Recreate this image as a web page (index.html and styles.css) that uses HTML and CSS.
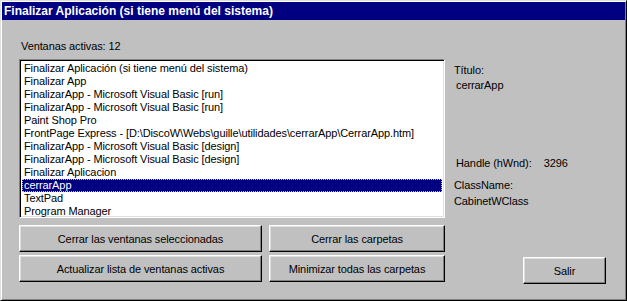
FILE: index.html
```html
<!DOCTYPE html>
<html lang="es">

<head>
    <meta charset="UTF-8">
    <title>Finalizar Aplicación</title>
    <link rel="stylesheet" href="styles.css">
</head>

<body>
    <!-- Ventana principal -->
    <div class="window">
        <div class="title-bar">Finalizar Aplicación (si tiene menú del sistema)</div>

        <div class="client">
            <!-- Columna izquierda: lista y botones -->
            <div class="left-col">
                <div class="label count">Ventanas activas: 12</div>

                <div class="listbox">
                    <div class="item">Finalizar Aplicación (si tiene menú del sistema)</div>
                    <div class="item">Finalizar App</div>
                    <div class="item">FinalizarApp - Microsoft Visual Basic [run]</div>
                    <div class="item">FinalizarApp - Microsoft Visual Basic [run]</div>
                    <div class="item">Paint Shop Pro</div>
                    <div class="item">FrontPage Express - [D:\DiscoW\Webs\guille\utilidades\cerrarApp\CerrarApp.htm]</div>
                    <div class="item">FinalizarApp - Microsoft Visual Basic [design]</div>
                    <div class="item">FinalizarApp - Microsoft Visual Basic [design]</div>
                    <div class="item">Finalizar Aplicacion</div>
                    <div class="item selected">cerrarApp</div>
                    <div class="item">TextPad</div>
                    <div class="item">Program Manager</div>
                </div>

                <div class="button-grid">
                    <button class="btn">Cerrar las ventanas seleccionadas</button>
                    <button class="btn">Cerrar las carpetas</button>
                    <button class="btn">Actualizar lista de ventanas activas</button>
                    <button class="btn">Minimizar todas las carpetas</button>
                </div>
            </div>

            <!-- Columna derecha: datos de la ventana -->
            <div class="right-col">
                <div class="label titulo">Título:</div>
                <div class="label value">cerrarApp</div>

                <div class="label handle">
                    <span>Handle (hWnd):</span>
                    <span class="handle-value">3296</span>
                </div>

                <div class="label classname">ClassName:</div>
                <div class="label class-value">CabinetWClass</div>

                <button class="btn btn-exit">Salir</button>
            </div>
        </div>
    </div>
</body>

</html>
```

FILE: styles.css
```css
/* Общие стили */
body {
    margin: 0;
    padding: 0;
    background-color: #c0c0c0;
    font-family: 'Liberation Sans', Arial, sans-serif;
    font-size: 11px;
    letter-spacing: -0.1px;
    color: #000;
}

/* Окно */
.window {
    width: 627px;
    height: 301px;
    box-sizing: border-box;
    padding: 1px;
    border: 1px solid;
    border-color: #dfdfdf #000 #000 #dfdfdf;
    box-shadow: inset 1px 1px #fff, inset -1px -1px #808080;
    background-color: #c0c0c0;
}

.title-bar {
    height: 18px;
    line-height: 18px;
    padding-left: 2px;
    background-color: #000080;
    color: #fff;
    font-weight: bold;
    font-size: 12px;
    letter-spacing: 0;
}

/* Клиентская область */
.client {
    display: flex;
    padding: 20px 0 0 17px;
}

.label {
    line-height: 13px;
    white-space: nowrap;
}

.left-col {
    width: 426px;
}

.count {
    padding-left: 2px;
    margin-bottom: 6px;
}

/* Список */
.listbox {
    height: 155px;
    overflow: hidden;
    background-color: #fff;
    border: 1px solid;
    border-color: #808080 #fff #fff #808080;
    box-shadow: inset 1px 1px #000, inset -1px -1px #dfdfdf;
    padding: 2px 2px 0 2px;
}

.item {
    height: 13px;
    line-height: 13px;
    padding-left: 2px;
    white-space: nowrap;
}

.item.selected {
    background-color: #000080;
    color: #fff;
    outline: 1px dotted #c0c0c0;
    outline-offset: -1px;
}

/* Кнопки */
.button-grid {
    display: grid;
    grid-template-columns: 243px 176px;
    column-gap: 7px;
    row-gap: 3px;
    margin-top: 7px;
}

.btn {
    height: 27px;
    padding: 0;
    font-family: 'Liberation Sans', Arial, sans-serif;
    font-size: 11px;
    letter-spacing: -0.1px;
    color: #000;
    background-color: #c0c0c0;
    border: 1px solid;
    border-color: #fff #000 #000 #fff;
    box-shadow: inset -1px -1px #808080, inset 1px 1px #dfdfdf;
}

/* Правая колонка */
.right-col {
    display: flex;
    flex-direction: column;
    align-items: flex-start;
    padding-left: 9px;
}

.titulo {
    margin-top: 24px;
}

.value {
    margin-top: 2px;
    padding-left: 2px;
}

.handle {
    display: flex;
    margin-top: 65px;
    padding-left: 2px;
}

.handle-value {
    margin-left: 12px;
}

.classname {
    margin-top: 9px;
}

.class-value {
    margin-top: 3px;
}

.btn-exit {
    width: 83px;
    margin-top: 49px;
    margin-left: 69px;
}
```
